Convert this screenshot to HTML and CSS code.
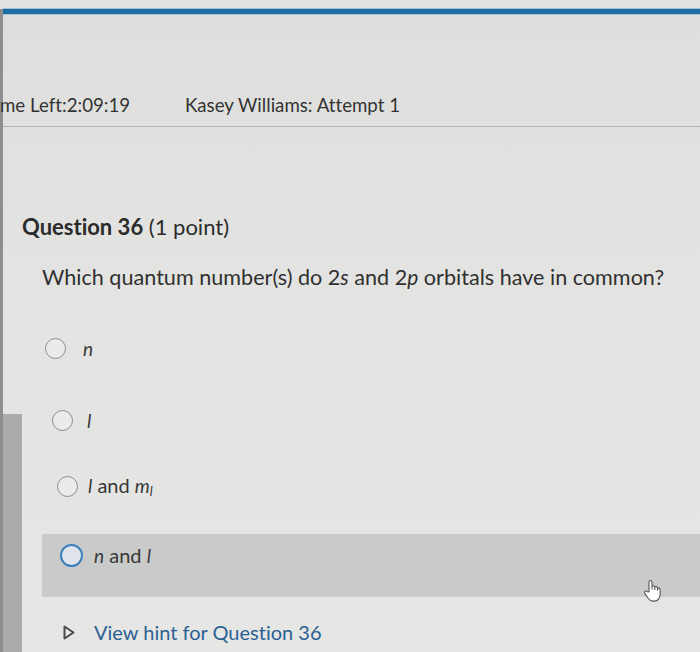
FILE: index.html
```html
<!DOCTYPE html>
<html>
<head>
<meta charset="utf-8">
<link rel="stylesheet" href="styles.css">
</head>
<body>
<div class="page">
  <div class="topline"></div>
  <header class="header">
    <span class="timer">me Left:2:09:19</span>
    <span class="attempt">Kasey Williams: Attempt 1</span>
  </header>
  <div class="body">
    <div class="rail"><div class="rail-bar"></div></div>
    <main class="content">
      <h2 class="qtitle"><b>Question 36</b> (1 point)</h2>
      <p class="qtext">Which quantum number(s) do 2<i>s</i> and 2<i>p</i> orbitals have in common?</p>
      <ul class="options">
        <li class="opt"><span class="radio"></span><span class="label"><i>n</i></span></li>
        <li class="opt"><span class="radio"></span><span class="label"><i>l</i></span></li>
        <li class="opt"><span class="radio"></span><span class="label"><i>l</i> and <i>m<sub>l</sub></i></span></li>
        <li class="opt hover"><span class="radio"></span><span class="label"><i>n</i> and <i>l</i></span>
          <svg class="cursor" width="20" height="24" viewBox="0 0 20 24"><path d="M6 13V3.2c0-1 .7-1.7 1.5-1.7S9 2.2 9 3.2V10V8.2c0-.9.7-1.5 1.4-1.5s1.4.6 1.4 1.5V10.5V9c0-.9.7-1.4 1.4-1.4s1.3.5 1.3 1.4v2.2-.8c0-.8.6-1.300 1.3-1.3s1.3.5 1.3 1.3v5.2c0 3.3-2.2 6.5-5.6 6.5h-1.6c-2.2 0-3.4-1-4.6-2.6L2 14.6c-.6-.8-.4-1.8.4-2.3.7-.4 1.6-.2 2.1.5z" fill="#fff" stroke="#555" stroke-width="1.1" stroke-linejoin="round"/></svg>
        </li>
      </ul>
      <div class="hint">
        <svg class="tri" width="12" height="15" viewBox="0 0 12 15"><path d="M1.5 1.5 L10.5 7.5 L1.5 13.5 Z" fill="none" stroke="#4a4a4a" stroke-width="2" stroke-linejoin="round"/></svg>
        <span class="hint-link">View hint for Question 36</span>
      </div>
    </main>
  </div>
</div>
</body>
</html>
```

FILE: styles.css
```css
html, body {
  margin: 0;
  padding: 0;
}
body {
  background: #e2e3e1;
  font-family: Lato, "Open Sans", "Liberation Sans", sans-serif;
  font-variant-ligatures: none;
  color: #333;
  width: 700px;
  height: 652px;
  overflow: hidden;
}
.page {
  height: 652px;
  border-left: 3px solid #8d8e8d;
  box-sizing: border-box;
  background: linear-gradient(180deg, #dedfdd 0%, #e3e4e2 40%, #e6e7e5 100%);
}
.topline {
  height: 5px;
  margin-top: 9px;
  background: #1f6ca4;
  box-shadow: 0 -1px 0 #9fc1da, 0 1px 0 #a8c6dc;
}
.header {
  display: flex;
  align-items: flex-end;
  height: 102px;
  padding-bottom: 10px;
  border-bottom: 1.5px solid #b2b3b2;
  font-size: 18.7px;
  color: #333;
}
.timer {
  margin-left: -3px;
  width: 185px;
}
.body {
  display: flex;
}
.rail {
  width: 19px;
  flex: none;
  padding-top: 287px;
}
.rail-bar {
  height: 260px;
  background: #a9aaa9;
}
.content {
  flex: 1;
  padding-top: 86px;
}
.qtitle {
  margin: 0;
  font-size: 22px;
  font-weight: 400;
  color: #2b2b2b;
  line-height: 28px;
}
.qtitle b {
  font-weight: 700;
}
.qtext {
  margin: 22px 0 0 20px;
  font-size: 21.6px;
  line-height: 28px;
  color: #303030;
}
.qtext i {
  font-size: 21px;
}
.options {
  list-style: none;
  margin: 36px 0 0 0;
  padding: 0;
}
.opt {
  position: relative;
  display: flex;
  align-items: center;
  height: 42px;
  margin-bottom: 30px;
  font-size: 20px;
  color: #383838;
}
.opt:nth-child(1) { margin-left: 23px; }
.opt:nth-child(2) { margin-left: 30px; margin-bottom: 24px; }
.opt:nth-child(3) { margin-left: 35px; margin-bottom: 27px; }
.opt.hover {
  margin-left: 20px;
  height: 63px;
  align-items: flex-start;
  padding-left: 18px;
  padding-top: 9px;
  box-sizing: border-box;
  background: #c9cbca;
  margin-bottom: 23px;
}
.radio {
  width: 19px;
  height: 19px;
  border: 1.6px solid #8b8c8b;
  border-radius: 50%;
  background: #ebecea;
  flex: none;
  margin-right: 14px;
}
.opt:nth-child(1) .radio { margin-right: 17px; }
.opt:nth-child(3) .radio { margin-right: 10px; }
.hover .radio {
  border: 2px solid #3d7fbd;
  background: #dfe5ea;
  margin-top: 1px;
  margin-right: 11px;
}
.label i {
  font-size: 19px;
}
.label sub {
  font-size: 13px;
  vertical-align: -3px;
}
.cursor {
  position: absolute;
  right: 37px;
  top: 45px;
}
.hint {
  display: flex;
  align-items: center;
  margin-left: 41px;
  font-size: 20px;
}
.tri {
  margin-right: 19px;
}
.hint-link {
  color: #2b6192;
}
```
